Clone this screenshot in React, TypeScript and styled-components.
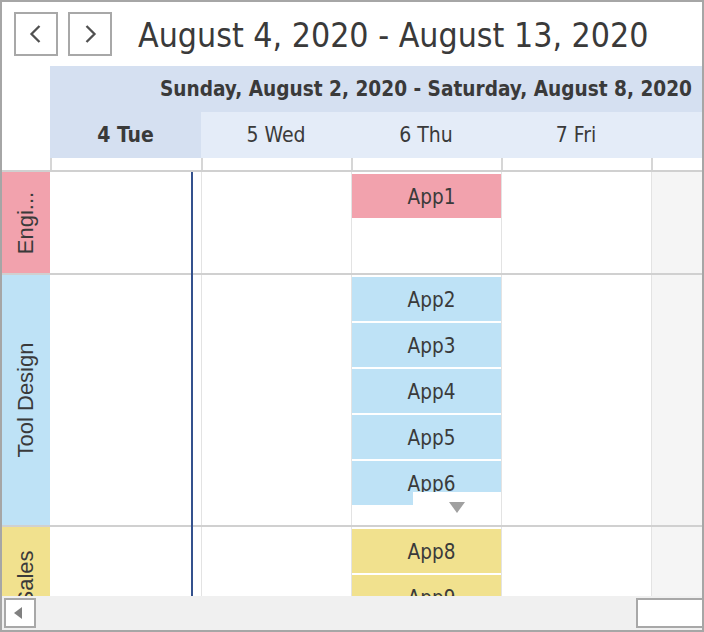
import React from 'react';
import styled, { createGlobalStyle } from 'styled-components';

const GlobalStyle = createGlobalStyle`
  * { box-sizing: border-box; }
  body {
    margin: 0;
    background: #ffffff;
    font-family: "DejaVu Sans Condensed", "DejaVu Sans", sans-serif;
    color: #3a3a3a;
  }
`;

const Frame = styled.div`
  width: 704px;
  height: 632px;
  border: 2px solid #a6a6a6;
  display: flex;
  flex-direction: column;
  overflow: hidden;
  background: #ffffff;
`;

const Toolbar = styled.div`
  height: 64px;
  flex: none;
  display: flex;
  align-items: center;
  padding-left: 12px;
  gap: 10px;
`;

const NavButton = styled.button`
  width: 44px;
  height: 44px;
  border: 2px solid #a8a8a8;
  background: #ffffff;
  padding: 0;
  display: flex;
  align-items: center;
  justify-content: center;
  cursor: pointer;
`;

const Title = styled.div`
  margin-left: 16px;
  padding-top: 2px;
  font-size: 33.6px;
  color: #3a3a3a;
  white-space: nowrap;
`;

const HeaderGrid = styled.div`
  flex: none;
  display: grid;
  grid-template-columns: 48px 151px 150px 150px 150px 1fr;
  grid-template-rows: 46px 46px 12px;
`;

const Corner = styled.div`
  grid-row: 1 / span 3;
  background: #ffffff;
`;

const WeekHeader = styled.div`
  grid-column: 2 / span 5;
  background: #d5e0f1;
  display: flex;
  align-items: center;
  justify-content: flex-end;
  padding-right: 10px;
  font-size: 20.6px;
  font-weight: bold;
  white-space: nowrap;
`;

const DayHeader = styled.div<{ $current?: boolean }>`
  background: ${({ $current }) => ($current ? '#d5e0f1' : '#e4ecf8')};
  font-weight: ${({ $current }) => ($current ? 'bold' : 'normal')};
  display: flex;
  align-items: center;
  justify-content: center;
  font-size: 21px;
  white-space: nowrap;
  overflow: hidden;
`;

const StripCell = styled.div`
  border-left: 2px solid #d6d6d6;
  background: #ffffff;
`;

const Rule = styled.div`
  flex: none;
  height: 2px;
  background: #d0d0d0;
`;

const Body = styled.div`
  position: relative;
  flex: 1;
  overflow: hidden;
  display: flex;
  flex-direction: column;
`;

const ResourceRow = styled.div<{ $height: number }>`
  flex: none;
  height: ${({ $height }) => $height}px;
  display: grid;
  grid-template-columns: 48px 151px 150px 150px 150px 1fr;
`;

const ResourceLabel = styled.div<{ $color: string }>`
  background: ${({ $color }) => $color};
  display: flex;
  align-items: center;
  justify-content: center;
  overflow: hidden;
`;

const LabelText = styled.span`
  transform: rotate(-90deg);
  font-family: "Liberation Sans", Arial, sans-serif;
  font-size: 22px;
  color: #3a3a3a;
  white-space: nowrap;
`;

const DayCell = styled.div<{ $first?: boolean; $weekend?: boolean }>`
  position: relative;
  border-left: ${({ $first }) => ($first ? 'none' : '1px solid #e3e3e3')};
  background: ${({ $weekend }) => ($weekend ? '#f5f5f5' : '#ffffff')};
  padding-top: 2px;
  display: flex;
  flex-direction: column;
  gap: 2px;
  overflow: hidden;
`;

const Appointment = styled.div<{ $color: string }>`
  flex: none;
  height: 44px;
  padding: 2px 0 0 10px;
  background: ${({ $color }) => $color};
  display: flex;
  align-items: center;
  justify-content: center;
  font-size: 20.5px;
  color: #3a3a3a;
`;

const MoreBox = styled.div`
  position: absolute;
  right: 0;
  bottom: 0;
  width: 88px;
  height: 33px;
  background: #ffffff;
  display: flex;
  justify-content: center;
  padding-top: 10px;
`;

const MoreArrow = styled.div`
  width: 0;
  height: 0;
  border-left: 8px solid transparent;
  border-right: 8px solid transparent;
  border-top: 11px solid #a0a0a0;
`;

const TimeLine = styled.div`
  position: absolute;
  top: 0;
  bottom: 0;
  left: 189px;
  width: 2px;
  background: #34518d;
`;

const Scrollbar = styled.div`
  flex: none;
  height: 34px;
  background: #f0f0f0;
  padding: 2px 0 4px 2px;
  display: flex;
  justify-content: space-between;
  overflow: hidden;
`;

const ScrollButton = styled.div`
  width: 32px;
  height: 30px;
  border: 2px solid #a8a8a8;
  background: #ffffff;
  display: flex;
  align-items: center;
  justify-content: center;
  padding-right: 4px;
`;

const ScrollArrow = styled.div`
  width: 0;
  height: 0;
  border-top: 6px solid transparent;
  border-bottom: 6px solid transparent;
  border-right: 8px solid #808080;
`;

const ScrollThumb = styled.div`
  width: 72px;
  height: 30px;
  margin-right: -6px;
  border: 2px solid #a8a8a8;
  background: #ffffff;
`;

const Chevron = ({ dir }: { dir: 'left' | 'right' }) => (
  <svg width="20" height="20" viewBox="0 0 20 20">
    <polyline
      points={dir === 'left' ? '13.5,2 5.5,10 13.5,18' : '6.5,2 14.5,10 6.5,18'}
      fill="none"
      stroke="#505050"
      strokeWidth="2.3"
    />
  </svg>
);

const PINK = '#f2a2ad';
const BLUE = '#bee2f6';
const YELLOW = '#f1e18e';

const days = [
  { label: '4 Tue', current: true },
  { label: '5 Wed' },
  { label: '6 Thu' },
  { label: '7 Fri' },
  { label: '' },
];

const resources = [
  { name: 'Engi...', color: PINK, height: 101, apps: ['App1'], more: false },
  { name: 'Tool Design', color: BLUE, height: 250, apps: ['App2', 'App3', 'App4', 'App5', 'App6'], more: true },
  { name: 'Sales', color: YELLOW, height: 101, apps: ['App8', 'App9'], more: false },
];

export default function App() {
  return (
    <>
      <GlobalStyle />
      <Frame>
        <Toolbar>
          <NavButton><Chevron dir="left" /></NavButton>
          <NavButton><Chevron dir="right" /></NavButton>
          <Title>August 4, 2020 - August 13, 2020</Title>
        </Toolbar>
        <HeaderGrid>
          <Corner />
          <WeekHeader>Sunday, August 2, 2020 - Saturday, August 8, 2020</WeekHeader>
          {days.map((d, i) => (
            <DayHeader key={i} $current={d.current}>{d.label}</DayHeader>
          ))}
          {days.map((_, i) => (
            <StripCell key={i} />
          ))}
        </HeaderGrid>
        <Rule />
        <Body>
          {resources.map((r, ri) => (
            <React.Fragment key={r.name}>
              {ri > 0 && <Rule />}
              <ResourceRow $height={r.height}>
                <ResourceLabel $color={r.color}>
                  <LabelText>{r.name}</LabelText>
                </ResourceLabel>
                {days.map((_, di) => (
                  <DayCell key={di} $first={di === 0} $weekend={di === 4}>
                    {di === 2 &&
                      r.apps.map((a) => (
                        <Appointment key={a} $color={r.color}>{a}</Appointment>
                      ))}
                    {di === 2 && r.more && (
                      <MoreBox><MoreArrow /></MoreBox>
                    )}
                  </DayCell>
                ))}
              </ResourceRow>
            </React.Fragment>
          ))}
          <TimeLine />
        </Body>
        <Scrollbar>
          <ScrollButton><ScrollArrow /></ScrollButton>
          <ScrollThumb />
        </Scrollbar>
      </Frame>
    </>
  );
}
